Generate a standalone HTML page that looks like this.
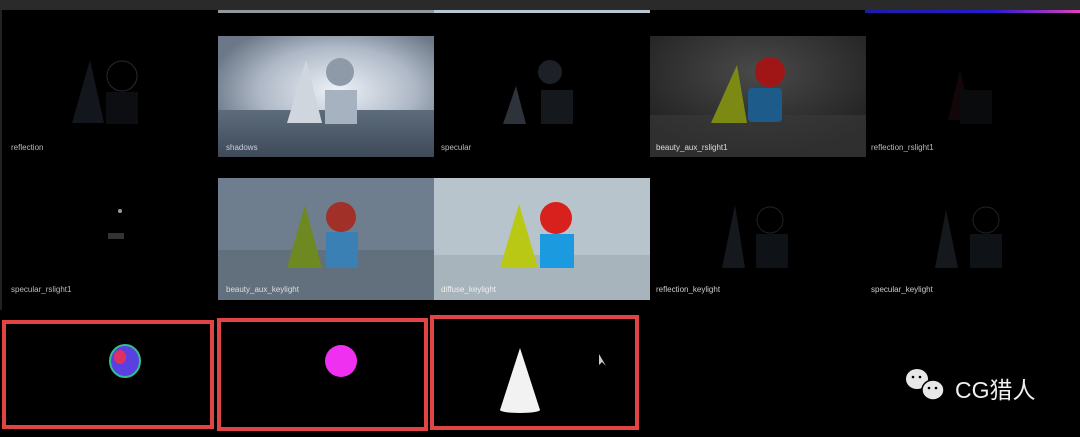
<!DOCTYPE html>
<html><head><meta charset="utf-8"><style>
html,body{margin:0;padding:0;background:#000;width:1080px;height:437px;overflow:hidden;font-family:"Liberation Sans","Noto Sans CJK SC",sans-serif}
</style></head><body>
<svg width="1080" height="437" viewBox="0 0 1080 437" xmlns="http://www.w3.org/2000/svg" style="display:block">
<defs>
<radialGradient id="sh" cx="0.55" cy="0.45" r="0.6"><stop offset="0" stop-color="#eef2f8"/><stop offset="0.6" stop-color="#aeb8c6"/><stop offset="1" stop-color="#6c7888"/></radialGradient>
<linearGradient id="shf" x1="0" y1="0" x2="0" y2="1"><stop offset="0" stop-color="#5d6c7c"/><stop offset="1" stop-color="#3e4a58"/></linearGradient>
<radialGradient id="bg1" cx="0.5" cy="0.3" r="0.7"><stop offset="0" stop-color="#4a4a4a"/><stop offset="1" stop-color="#1e1e1e"/></radialGradient>
<linearGradient id="bl" x1="0" y1="0" x2="1" y2="0"><stop offset="0" stop-color="#1c1ca8"/><stop offset="0.6" stop-color="#2a1ad0"/><stop offset="1" stop-color="#e040c0"/></linearGradient>
</defs>
<rect x="0" y="0" width="1080" height="10" fill="#2a2a2a"/>
<rect x="218" y="10" width="216" height="3" fill="#8f979f"/>
<rect x="434" y="10" width="216" height="3" fill="#b7c6d2"/>
<rect x="865" y="10" width="215" height="3" fill="url(#bl)"/>
<rect x="0" y="10" width="2" height="300" fill="#222"/>

<g opacity="0.45"><polygon points="90,60 72,123 104,123" fill="#2a3240"/><circle cx="122" cy="76" r="15" fill="none" stroke="#555c66"/><rect x="106" y="92" width="32" height="32" fill="#1c2028"/></g>
<text x="11" y="150" fill="#bbb" font-size="8">reflection</text>

<rect x="218" y="36" width="216" height="121" fill="url(#sh)"/>
<rect x="218" y="110" width="216" height="47" fill="url(#shf)"/>
<polygon points="306,60 287,123 322,123" fill="#cfd6de"/>
<circle cx="340" cy="72" r="14" fill="#8f9aa8"/>
<rect x="325" y="90" width="32" height="34" fill="#a6b2c0"/>
<text x="226" y="150" fill="#ccd" font-size="8">shadows</text>

<g opacity="0.7"><polygon points="516,86 503,124 526,124" fill="#404854"/>
<circle cx="550" cy="72" r="12" fill="#2a3038"/>
<rect x="541" y="90" width="32" height="34" fill="#1e242c"/></g>
<text x="441" y="150" fill="#bbb" font-size="8">specular</text>

<rect x="650" y="36" width="216" height="121" fill="url(#bg1)"/>
<rect x="650" y="115" width="216" height="42" fill="#3a3a3a" opacity="0.6"/>
<polygon points="737,65 711,123 747,123" fill="#7c8a14"/>
<circle cx="770" cy="72" r="15" fill="#a01616"/>
<rect x="748" y="88" width="34" height="34" rx="4" fill="#1d5c8a"/>
<text x="656" y="150" fill="#ddd" font-size="8">beauty_aux_rslight1</text>

<g opacity="0.4"><polygon points="960,70 948,120 972,120" fill="#301014"/><rect x="960" y="90" width="32" height="34" fill="#181c22"/></g>
<text x="871" y="150" fill="#bbb" font-size="8">reflection_rslight1</text>

<circle cx="120" cy="211" r="2" fill="#999"/>
<rect x="108" y="233" width="16" height="6" fill="#333"/>
<text x="11" y="292" fill="#bbb" font-size="8">specular_rslight1</text>

<rect x="218" y="178" width="216" height="122" fill="#6e7e8e"/>
<rect x="218" y="250" width="216" height="50" fill="#62707e"/>
<polygon points="305,205 287,268 322,268" fill="#6e8822"/>
<circle cx="341" cy="217" r="15" fill="#a03028"/>
<rect x="326" y="232" width="32" height="36" fill="#3a80b4"/>
<text x="226" y="292" fill="#ddd" font-size="8">beauty_aux_keylight</text>

<rect x="434" y="178" width="216" height="122" fill="#b8c4cc"/>
<rect x="434" y="255" width="216" height="45" fill="#a8b4bc"/>
<polygon points="519,204 500,268 538,268" fill="#b8c814"/>
<circle cx="556" cy="218" r="16" fill="#d8201c"/>
<rect x="540" y="234" width="34" height="34" fill="#1c9ae0"/>
<text x="441" y="292" fill="#eee" font-size="8">diffuse_keylight</text>

<g opacity="0.5"><polygon points="735,205 722,268 745,268" fill="#2a323c"/><circle cx="770" cy="220" r="13" fill="none" stroke="#444"/><rect x="756" y="234" width="32" height="34" fill="#1e242c"/></g>
<text x="656" y="292" fill="#ccc" font-size="8">reflection_keylight</text>

<g opacity="0.5"><polygon points="946,210 935,268 958,268" fill="#2a323c"/><circle cx="986" cy="220" r="13" fill="none" stroke="#444"/><rect x="970" y="234" width="32" height="34" fill="#1e242c"/></g>
<text x="871" y="292" fill="#ccc" font-size="8">specular_keylight</text>

<rect x="4" y="322" width="208" height="105" fill="none" stroke="#e04444" stroke-width="4"/>
<rect x="219" y="320" width="207" height="109" fill="none" stroke="#e04444" stroke-width="4"/>
<rect x="432" y="317" width="205" height="111" fill="none" stroke="#e04444" stroke-width="4"/>
<ellipse cx="125" cy="361" rx="15" ry="16" fill="#5a40e0"/>
<ellipse cx="125" cy="361" rx="15" ry="16" fill="none" stroke="#30c090" stroke-width="2"/>
<ellipse cx="120" cy="357" rx="6" ry="7" fill="#e03060"/>
<circle cx="341" cy="361" r="16" fill="#f030f0"/>
<polygon points="520,348 500,410 540,410" fill="#f2f2f2"/>
<ellipse cx="520" cy="410" rx="20" ry="3" fill="#f2f2f2"/>
<polygon points="599,354 599,365 602,362 606,366" fill="#ccc"/>

<ellipse cx="917" cy="379" rx="11" ry="10" fill="#e8e8e8"/>
<ellipse cx="933" cy="390" rx="11" ry="10" fill="#e8e8e8" stroke="#000" stroke-width="1.5"/>
<circle cx="913" cy="377" r="1.3" fill="#000"/><circle cx="920" cy="377" r="1.3" fill="#000"/>
<circle cx="929" cy="388" r="1.3" fill="#000"/><circle cx="936" cy="388" r="1.3" fill="#000"/>
<text x="955" y="398" fill="#f0f0f0" font-size="23">CG猎人</text>
</svg>
</body></html>
